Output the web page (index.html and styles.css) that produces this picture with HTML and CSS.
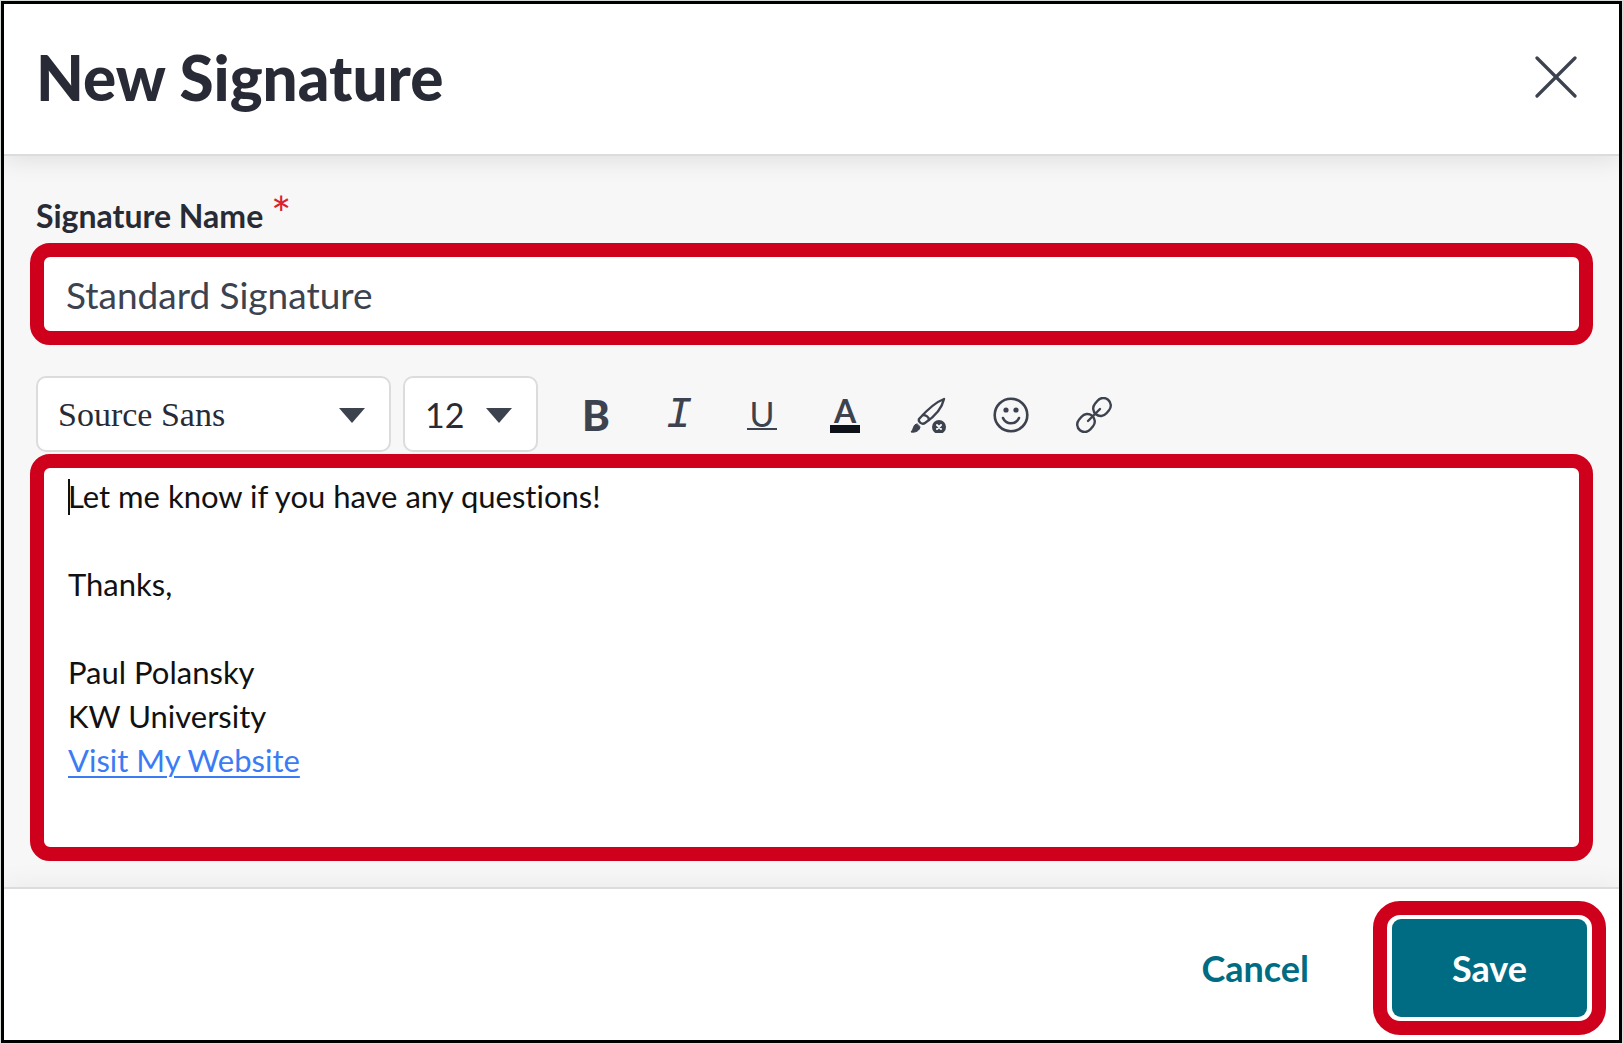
FILE: index.html
```html
<!DOCTYPE html>
<html lang="en">
<head>
  <meta charset="UTF-8">
  <meta name="viewport" content="width=device-width, initial-scale=1.0">
  <title>New Signature</title>
  <link rel="stylesheet" href="styles.css">
</head>
<body>
  <form class="modal">
    <header class="modal-header">
      <h1 class="modal-title">New Signature</h1>
      <button type="button" class="close-btn" aria-label="Close">
        <svg width="42" height="42" viewBox="0 0 42 42" fill="none" stroke="currentColor" stroke-width="3.2" stroke-linecap="round">
          <line x1="2" y1="2" x2="40" y2="40"></line>
          <line x1="40" y1="2" x2="2" y2="40"></line>
        </svg>
      </button>
    </header>

    <main class="modal-body">
      <label class="field-label" for="signatureName">Signature Name <span class="required">*</span></label>
      <input id="signatureName" class="name-input highlight" type="text" value="Standard Signature">

      <div class="toolbar">
        <div class="select-box font-select">
          <select aria-label="Font">
            <option>Source Sans</option>
          </select>
        </div>
        <div class="select-box size-select">
          <select aria-label="Font size">
            <option>12</option>
          </select>
        </div>
        <div class="tools">
          <button type="button" class="tool tool-bold" aria-label="Bold">B</button>
          <button type="button" class="tool tool-italic" aria-label="Italic">I</button>
          <button type="button" class="tool tool-underline" aria-label="Underline"><span>U</span></button>
          <button type="button" class="tool tool-color" aria-label="Text color"><span>A</span></button>
          <button type="button" class="tool" aria-label="Clear formatting">
            <svg width="36" height="36" viewBox="0 0 36 36" fill="none" stroke="currentColor" stroke-width="2.4" stroke-linecap="round" stroke-linejoin="round">
              <path d="M34 2C26 5 17 13 9 22c-1 3 3 6 6 4C24 20 32 11 34 2z"></path>
              <path d="M13 18c3 0 6 2 6 5"></path>
              <path d="M7 27c-4 0-3 5-6 8 5 1 9-2 9-5z" fill="currentColor" stroke-width="1"></path>
              <circle cx="29" cy="30" r="7" fill="currentColor" stroke="none"></circle>
              <path d="M27 28l4 4M31 28l-4 4" stroke="#f7f7f7" stroke-width="2"></path>
            </svg>
          </button>
          <button type="button" class="tool" aria-label="Emoji">
            <svg width="36" height="36" viewBox="0 0 36 36" fill="none" stroke="currentColor" stroke-width="2.6" stroke-linecap="round">
              <circle cx="18" cy="18" r="16.3"></circle>
              <circle cx="13" cy="13" r="2.6" fill="currentColor" stroke="none"></circle>
              <circle cx="23" cy="13" r="2.6" fill="currentColor" stroke="none"></circle>
              <path d="M10 21c3 7 13 7 16 0"></path>
            </svg>
          </button>
          <button type="button" class="tool" aria-label="Link">
            <svg width="36" height="36" viewBox="0 0 36 36" fill="none" stroke="currentColor" stroke-width="2.4" stroke-linecap="round">
              <rect x="-9.5" y="-7.5" width="19" height="15" rx="7.5" transform="translate(26 10) rotate(-50)"></rect>
              <rect x="-9.5" y="-7.5" width="19" height="15" rx="7.5" transform="translate(10 26) rotate(-50)"></rect>
              <path d="M12 24L24 12"></path>
            </svg>
          </button>
        </div>
      </div>

      <div class="editor highlight" contenteditable="true" role="textbox" aria-multiline="true" aria-label="Signature">
        <p><span class="caret"></span>Let me know if you have any questions!</p>
        <p><br></p>
        <p>Thanks,</p>
        <p><br></p>
        <p>Paul Polansky</p>
        <p>KW University</p>
        <p><a href="#">Visit My Website</a></p>
      </div>
    </main>

    <footer class="modal-footer">
      <button type="button" class="cancel-btn">Cancel</button>
      <div class="save-ring">
        <button type="submit" class="save-btn">Save</button>
      </div>
    </footer>
  </form>
</body>
</html>
```

FILE: styles.css
```css
:root {
  --red: #cf001c;
  --teal: #006c83;
  --dark: #282b35;
  --icon: #3d424f;
  --line: #dcdcdc;
  --panel: #f7f7f7;
}

* {
  margin: 0;
  padding: 0;
  box-sizing: border-box;
}

body {
  padding: 1px;
  background: #dde2de;
  color: var(--dark);
  font-family: Lato, sans-serif;
  font-variant-ligatures: none;
}

button, input, select {
  font: inherit;
  color: inherit;
  background: none;
  border: none;
}

button {
  cursor: pointer;
}

.modal {
  display: flex;
  flex-direction: column;
  min-height: calc(100vh - 2px);
  border: 3px solid #000;
  background: var(--panel);
}

.modal-header {
  display: flex;
  align-items: center;
  justify-content: space-between;
  height: 152px;
  padding: 0 42px 4px 32px;
  background: #fff;
  border-bottom: 2px solid var(--line);
  box-shadow: 0 4px 24px rgba(0, 0, 0, 0.1);
}

.modal-title {
  font-size: 62px;
  line-height: 72px;
  font-weight: 900;
}

.close-btn {
  display: flex;
  color: var(--icon);
}

.modal-body {
  flex: 1;
  display: flex;
  flex-direction: column;
  padding: 38px 26px 26px;
}

.field-label {
  margin: 0 6px 5px;
  font-size: 32px;
  line-height: 44px;
  font-weight: 700;
}

.required {
  color: #d9232e;
  font-weight: 400;
  font-size: 48px;
  line-height: 30px;
  vertical-align: -4px;
}

.highlight {
  background: #fff;
  border: 14px solid var(--red);
  border-radius: 20px;
  outline: none;
}

.name-input {
  width: 100%;
  height: 102px;
  padding: 0 22px;
  color: var(--icon);
  font-size: 37px;
}

.toolbar {
  display: flex;
  align-items: center;
  gap: 12px;
  margin: 31px 6px 2px;
}

.select-box {
  position: relative;
  height: 76px;
  background: #fff;
  border: 2px solid var(--line);
  border-radius: 10px;
}

.select-box::after {
  content: '';
  position: absolute;
  top: 30px;
  right: 24px;
  width: 26px;
  height: 15px;
  background: var(--icon);
  clip-path: polygon(0 0, 100% 0, 50% 100%);
  pointer-events: none;
}

.select-box select {
  width: 100%;
  height: 100%;
  padding: 0 20px;
  appearance: none;
}

.font-select {
  width: 355px;
  font-family: "Liberation Serif", serif;
  font-size: 34px;
}

.size-select {
  width: 135px;
  font-size: 34px;
}

.tools {
  display: flex;
  gap: 47px;
  margin: 2px 0 0 28px;
}

.tool {
  display: flex;
  align-items: center;
  justify-content: center;
  width: 36px;
  height: 36px;
  color: var(--icon);
}

.tool-bold {
  font-size: 42px;
  font-weight: 900;
}

.tool-italic {
  font-family: "Liberation Mono", monospace;
  font-size: 44px;
  line-height: 40px;
  font-style: italic;
}

.tool-underline span,
.tool-color span {
  width: 30px;
  font-size: 34px;
  line-height: 28px;
  border-bottom: 2px solid var(--icon);
}

.tool-color span {
  font-size: 32px;
  font-weight: 700;
  border-bottom: 8px solid #0d1218;
}

.editor {
  flex: 1;
  padding: 6px 24px;
  color: #111;
  font-size: 31px;
  line-height: 44px;
}

.editor a {
  color: #3b7cf5;
  text-underline-offset: 4px;
  text-decoration-thickness: 2px;
}

.caret {
  display: inline-block;
  width: 2px;
  height: 36px;
  margin: -6px -2px 0 0;
  background: #111;
  vertical-align: middle;
}

.modal-footer {
  display: flex;
  align-items: center;
  justify-content: flex-end;
  gap: 64px;
  padding: 12px 13px 5px;
  background: #fff;
  border-top: 2px solid var(--line);
  box-shadow: 0 -4px 24px rgba(0, 0, 0, 0.05);
  font-size: 36px;
  font-weight: 700;
}

.cancel-btn {
  color: var(--teal);
}

.save-ring {
  padding: 4px 5px;
  border: 14px solid var(--red);
  border-radius: 27px;
}

.save-btn {
  width: 195px;
  height: 98px;
  color: #fff;
  background: var(--teal);
  border-radius: 9px;
}
```
